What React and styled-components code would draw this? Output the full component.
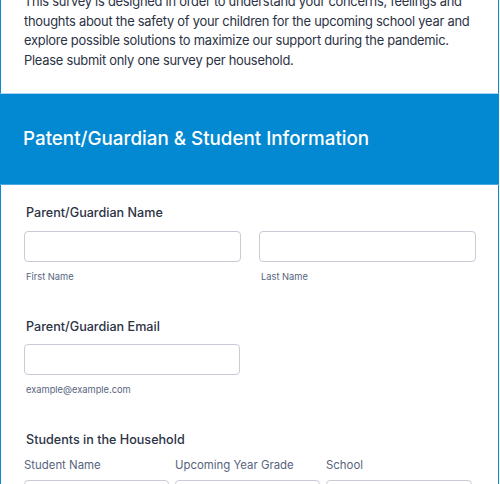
import React from 'react'
import styled, { createGlobalStyle } from 'styled-components'

const GlobalStyle = createGlobalStyle`
  html, body {
    margin: 0;
    padding: 0;
    background: #ffffff;
    overflow: hidden;
  }
  body {
    font-family: Inter, "Noto Sans", "Liberation Sans", sans-serif;
    color: #2c3345;
  }
`

const Page = styled.div`
  width: 499px;
  margin-top: -8px;
`

const IntroSection = styled.section`
  border-left: 1.5px solid #0a8ad3;
  border-right: 1.5px solid #0a8ad3;
  border-bottom: 1px solid #a9d3f2;
  padding: 0 20px 22px 23px;
`

const IntroText = styled.p`
  margin: 0;
  font-size: 12.9px;
  letter-spacing: -0.25px;
  line-height: 19.7px;
  color: #2c3345;
`

const Band = styled.header`
  background: #0389d1;
  height: 90px;
  display: flex;
  align-items: center;
  padding: 0 23px;
  border-bottom: 1px solid #4aa8e0;
`

const BandTitle = styled.h1`
  margin: 0;
  font-size: 18.8px;
  font-weight: 500;
  color: #ffffff;
`

const FormSection = styled.section`
  border-left: 1.5px solid #0a8ad3;
  border-right: 1.5px solid #0a8ad3;
  padding: 19px 22px 0 23px;
  display: flex;
  flex-direction: column;
`

const Field = styled.div`
  display: flex;
  flex-direction: column;
  margin-bottom: 34px;
`

const Label = styled.label`
  font-size: 12.6px;
  line-height: 18px;
  font-weight: 450;
  color: #2c3345;
  padding-left: 2px;
  margin-bottom: ${p => p.$mb || 9}px;
`

const Row = styled.div`
  display: grid;
  grid-template-columns: ${p => p.$cols};
  column-gap: ${p => p.$colGap || 18}px;
`

const Cell = styled.div`
  display: flex;
  flex-direction: column;
`

const Input = styled.div`
  height: 31px;
  box-sizing: border-box;
  border: 1px solid #c8ccd6;
  border-radius: 4px;
  background: #ffffff;
  width: ${p => p.$w || 'auto'};
`

const SubLabel = styled.span`
  font-size: 9.3px;
  line-height: 14px;
  color: #57647e;
  margin-top: 8px;
  padding-left: 2px;
`

const ColHead = styled.span`
  font-size: 11.4px;
  line-height: 16px;
  color: #57647e;
  margin-bottom: 7px;
`

export default function App() {
  return (
    <Page>
      <GlobalStyle />
      <IntroSection>
        <IntroText>
          This survey is designed in order to understand your concerns, feelings and
          thoughts about the safety of your children for the upcoming school year and
          explore possible solutions to maximize our support during the pandemic.
          Please submit only one survey per household.
        </IntroText>
      </IntroSection>
      <Band>
        <BandTitle>Patent/Guardian &amp; Student Information</BandTitle>
      </Band>
      <FormSection>
        <Field>
          <Label>Parent/Guardian Name</Label>
          <Row $cols="1fr 1fr" $colGap={18}>
            <Cell>
              <Input />
              <SubLabel>First Name</SubLabel>
            </Cell>
            <Cell>
              <Input />
              <SubLabel>Last Name</SubLabel>
            </Cell>
          </Row>
        </Field>
        <Field>
          <Label $mb={8}>Parent/Guardian Email</Label>
          <Cell>
            <Input $w="216px" />
            <SubLabel>example@example.com</SubLabel>
          </Cell>
        </Field>
        <Field>
          <Label $mb={8}>Students in the Household</Label>
          <Row $cols="145px 145px 146px" $colGap={6}>
            <Cell>
              <ColHead>Student Name</ColHead>
              <Input />
            </Cell>
            <Cell>
              <ColHead>Upcoming Year Grade</ColHead>
              <Input />
            </Cell>
            <Cell>
              <ColHead>School</ColHead>
              <Input />
            </Cell>
          </Row>
        </Field>
      </FormSection>
    </Page>
  )
}
